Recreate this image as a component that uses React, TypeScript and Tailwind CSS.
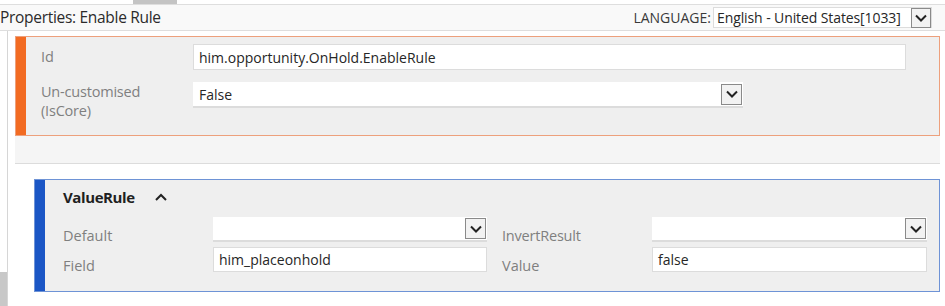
const Chevron = ({ up = false }: { up?: boolean }) => (
  <svg width="12" height="8" viewBox="0 0 12 8" fill="none">
    <polyline
      points={up ? "1,7 6,2 11,7" : "1,1.5 6,6.5 11,1.5"}
      stroke="#222"
      strokeWidth="2"
    />
  </svg>
);

const DropButton: React.FC = () => (
  <div className="w-[21px] h-[21px] flex items-center justify-center border border-[#8a8a8a] bg-[#f2f2f2]">
    <Chevron />
  </div>
);

const Select: React.FC<{ value?: string; width: string; height: string }> = ({ value, width, height }) => (
  <div className={`${width} ${height} flex items-center justify-between bg-white border-b-2 border-[#dcdcdc] pl-[6px] pr-[1px]`}>
    <span className="text-[14px] text-[#262626]">{value}</span>
    <DropButton />
  </div>
);

const TextBox: React.FC<{ value: string; width: string; height: string }> = ({ value, width, height }) => (
  <div className={`${width} ${height} flex items-center bg-white border border-[#dcdcdc] px-[5px]`}>
    <span className="text-[14px] text-[#262626]">{value}</span>
  </div>
);

const App: React.FC = () => {
  return (
    <div className="w-[945px] h-[306px] bg-white overflow-hidden flex flex-col font-['Segoe_UI','Open_Sans',sans-serif]">
      <div className="h-[4px] flex">
        <div className="ml-[133px] w-[44px] bg-[#c4c4c4]" />
      </div>

      {/* header */}
      <div className="h-[27px] flex items-center justify-between border-t border-b border-[#dedede] bg-[#f9f9f9] pr-[13px]">
        <span className="text-[15.5px] text-[#2b2b2b] tracking-[-0.3px]">Properties: Enable Rule</span>
        <div className="flex items-center gap-[2px]">
          <span className="text-[14px] text-[#3a3a3a]">LANGUAGE:</span>
          <div className="w-[219px] h-[21px] flex items-center justify-between bg-white border border-[#dcdcdc]">
            <span className="pl-[3px] text-[14px] text-[#262626] tracking-[-0.1px]">English - United States[1033]</span>
            <div className="w-[20px] h-[20px] flex items-center justify-center border border-[#8a8a8a] bg-[#f2f2f2]">
              <Chevron />
            </div>
          </div>
        </div>
      </div>

      <div className="flex-1 flex">
        <div className="w-[8px] flex flex-col border-r border-[#d6d6d6]">
          <div className="flex-1" />
          <div className="h-[34px] bg-[#c8c8c8]" />
        </div>

        <div className="flex-1 pl-[7px] pr-[5px] pt-[5px]">
          {/* orange section */}
          <div className="h-[100px] flex border border-[#eda07c] bg-[#efefef]">
            <div className="w-[10px] bg-[#f26b22]" />
            <div className="flex-1 pl-[15px] pt-[7px] flex flex-col gap-[12px]">
              <div className="flex items-center">
                <span className="w-[152px] text-[14.5px] text-[#7f7f7f]">Id</span>
                <TextBox value="him.opportunity.OnHold.EnableRule" width="w-[713px]" height="h-[26px]" />
              </div>
              <div className="flex items-start">
                <span className="w-[152px] text-[14.5px] leading-[19px] text-[#7f7f7f] tracking-[-0.2px]">
                  Un-customised
                  <br />
                  (IsCore)
                </span>
                <Select value="False" width="w-[550px]" height="h-[26px]" />
              </div>
            </div>
          </div>

          <div className="h-[28px] bg-[#f5f5f5] border-b border-[#dcdcdc]" />

          {/* blue section */}
          <div className="mt-[15px] ml-[19px] h-[113px] flex border border-[#6e93d6] bg-[#efefef]">
            <div className="w-[10px] bg-[#1b56c5]" />
            <div className="flex-1 pl-[18px] pt-[6px]">
              <div className="flex items-center gap-[20px] h-[22px]">
                <span className="text-[15px] font-bold text-[#1f1f1f] tracking-[-0.4px]">ValueRule</span>
                <Chevron up />
              </div>
              <div className="mt-[9px] flex flex-col gap-[5px]">
                <div className="flex items-center h-[25px]">
                  <span className="w-[150px] mt-[13px] text-[14.5px] text-[#7f7f7f]">Default</span>
                  <Select width="w-[274px]" height="h-[25px]" />
                  <span className="w-[165px] mt-[13px] pl-[15px] text-[14.5px] text-[#7f7f7f] tracking-[-0.2px]">InvertResult</span>
                  <Select width="w-[275px]" height="h-[25px]" />
                </div>
                <div className="flex items-center h-[25px]">
                  <span className="w-[150px] mt-[13px] text-[14.5px] text-[#7f7f7f]">Field</span>
                  <TextBox value="him_placeonhold" width="w-[274px]" height="h-[25px]" />
                  <span className="w-[165px] mt-[13px] pl-[15px] text-[14.5px] text-[#7f7f7f]">Value</span>
                  <TextBox value="false" width="w-[275px]" height="h-[25px]" />
                </div>
              </div>
            </div>
          </div>
        </div>
      </div>
    </div>
  );
};

export default App;
